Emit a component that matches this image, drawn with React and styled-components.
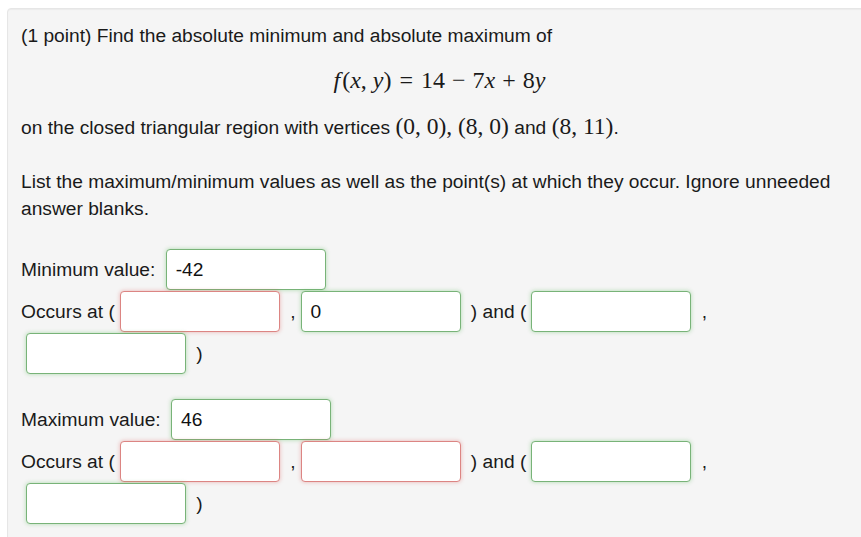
import React from 'react'
import styled, { createGlobalStyle } from 'styled-components'

const Global = createGlobalStyle`
  html, body {
    margin: 0;
    padding: 0;
    background: #ffffff;
    overflow: hidden;
  }
  body {
    font-family: "Liberation Sans", Arial, sans-serif;
    color: #1a1a1a;
  }
`

const Page = styled.div`
  width: 861px;
  height: 537px;
  overflow: hidden;
  padding: 8px 0 0 7px;
  box-sizing: border-box;
`

const Well = styled.div`
  width: 870px;
  min-height: 560px;
  box-sizing: border-box;
  padding: 13px 0 0 13px;
  background: #f5f5f5;
  border: 1px solid #e6e6e6;
  border-radius: 4px;
  box-shadow: inset 0 1px 1px rgba(0, 0, 0, 0.04);
  font-size: 19.2px;
  line-height: 27px;
`

const Para = styled.div`
  margin: 0;
  margin-top: ${p => p.$gap || 0}px;
`

const Display = styled.div`
  text-align: center;
  margin: 18px 0 18px;
  padding-right: 18px;
`

const Math = styled.span`
  font-family: "Liberation Serif", "Times New Roman", serif;
  font-size: ${p => p.$size || 23}px;
  white-space: nowrap;
`

const Var = styled.i`
  font-style: italic;
  margin-right: ${p => p.$kern || 0}px;
`

const Op = styled.span`
  margin: 0 ${p => p.$space || 5}px;
`

const AnswerBlock = styled.div`
  margin-top: ${p => p.$gap || 0}px;
  line-height: 42px;
  width: 850px;
`

const Blank = styled.span`
  display: inline-block;
  vertical-align: top;
  box-sizing: border-box;
  width: 160px;
  height: 41px;
  margin: 0 5px;
  padding: 0 9px;
  background: #ffffff;
  border-radius: 4px;
  border: 1px solid ${p => (p.$ok ? '#78b378' : '#dc8583')};
  box-shadow: 0 0 4px ${p => (p.$ok ? 'rgba(92, 184, 92, 0.45)' : 'rgba(217, 83, 79, 0.4)')};
  font-size: 19.2px;
  line-height: 39px;
  color: #111;
`

const Occurs = ({ marks }) => (
  <>
    Occurs at (<Blank $ok={marks[0].ok}>{marks[0].v}</Blank> ,<Blank $ok={marks[1].ok}>{marks[1].v}</Blank> ) and (<Blank $ok={marks[2].ok}>{marks[2].v}</Blank> ,{' '}
    <Blank $ok={marks[3].ok}>{marks[3].v}</Blank> )
  </>
)

const minMarks = [
  { ok: false, v: '' },
  { ok: true, v: '0' },
  { ok: true, v: '' },
  { ok: true, v: '' },
]

const maxMarks = [
  { ok: false, v: '' },
  { ok: false, v: '' },
  { ok: true, v: '' },
  { ok: true, v: '' },
]

export default function App() {
  return (
    <Page>
      <Global />
      <Well>
        <Para>(1 point) Find the absolute minimum and absolute maximum of</Para>
        <Display>
          <Math $size={24}>
            <Var $kern={2}>f</Var>(<Var>x</Var>, <Var>y</Var>)<Op $space={8}>=</Op>14<Op $space={7}>−</Op>7<Var>x</Var><Op $space={7}>+</Op>8<Var>y</Var>
          </Math>
        </Display>
        <Para>
          on the closed triangular region with vertices{' '}
          <Math $size={23.5}>(0, 0), (8, 0)</Math> and <Math $size={23.5}>(8, 11)</Math>.
        </Para>
        <Para $gap={27}>
          List the maximum/minimum values as well as the point(s) at which they occur. Ignore unneeded answer blanks.
        </Para>
        <AnswerBlock $gap={27}>
          Minimum value: <Blank $ok>-42</Blank>
          <br />
          <Occurs marks={minMarks} />
        </AnswerBlock>
        <AnswerBlock $gap={24}>
          Maximum value: <Blank $ok>46</Blank>
          <br />
          <Occurs marks={maxMarks} />
        </AnswerBlock>
      </Well>
    </Page>
  )
}
